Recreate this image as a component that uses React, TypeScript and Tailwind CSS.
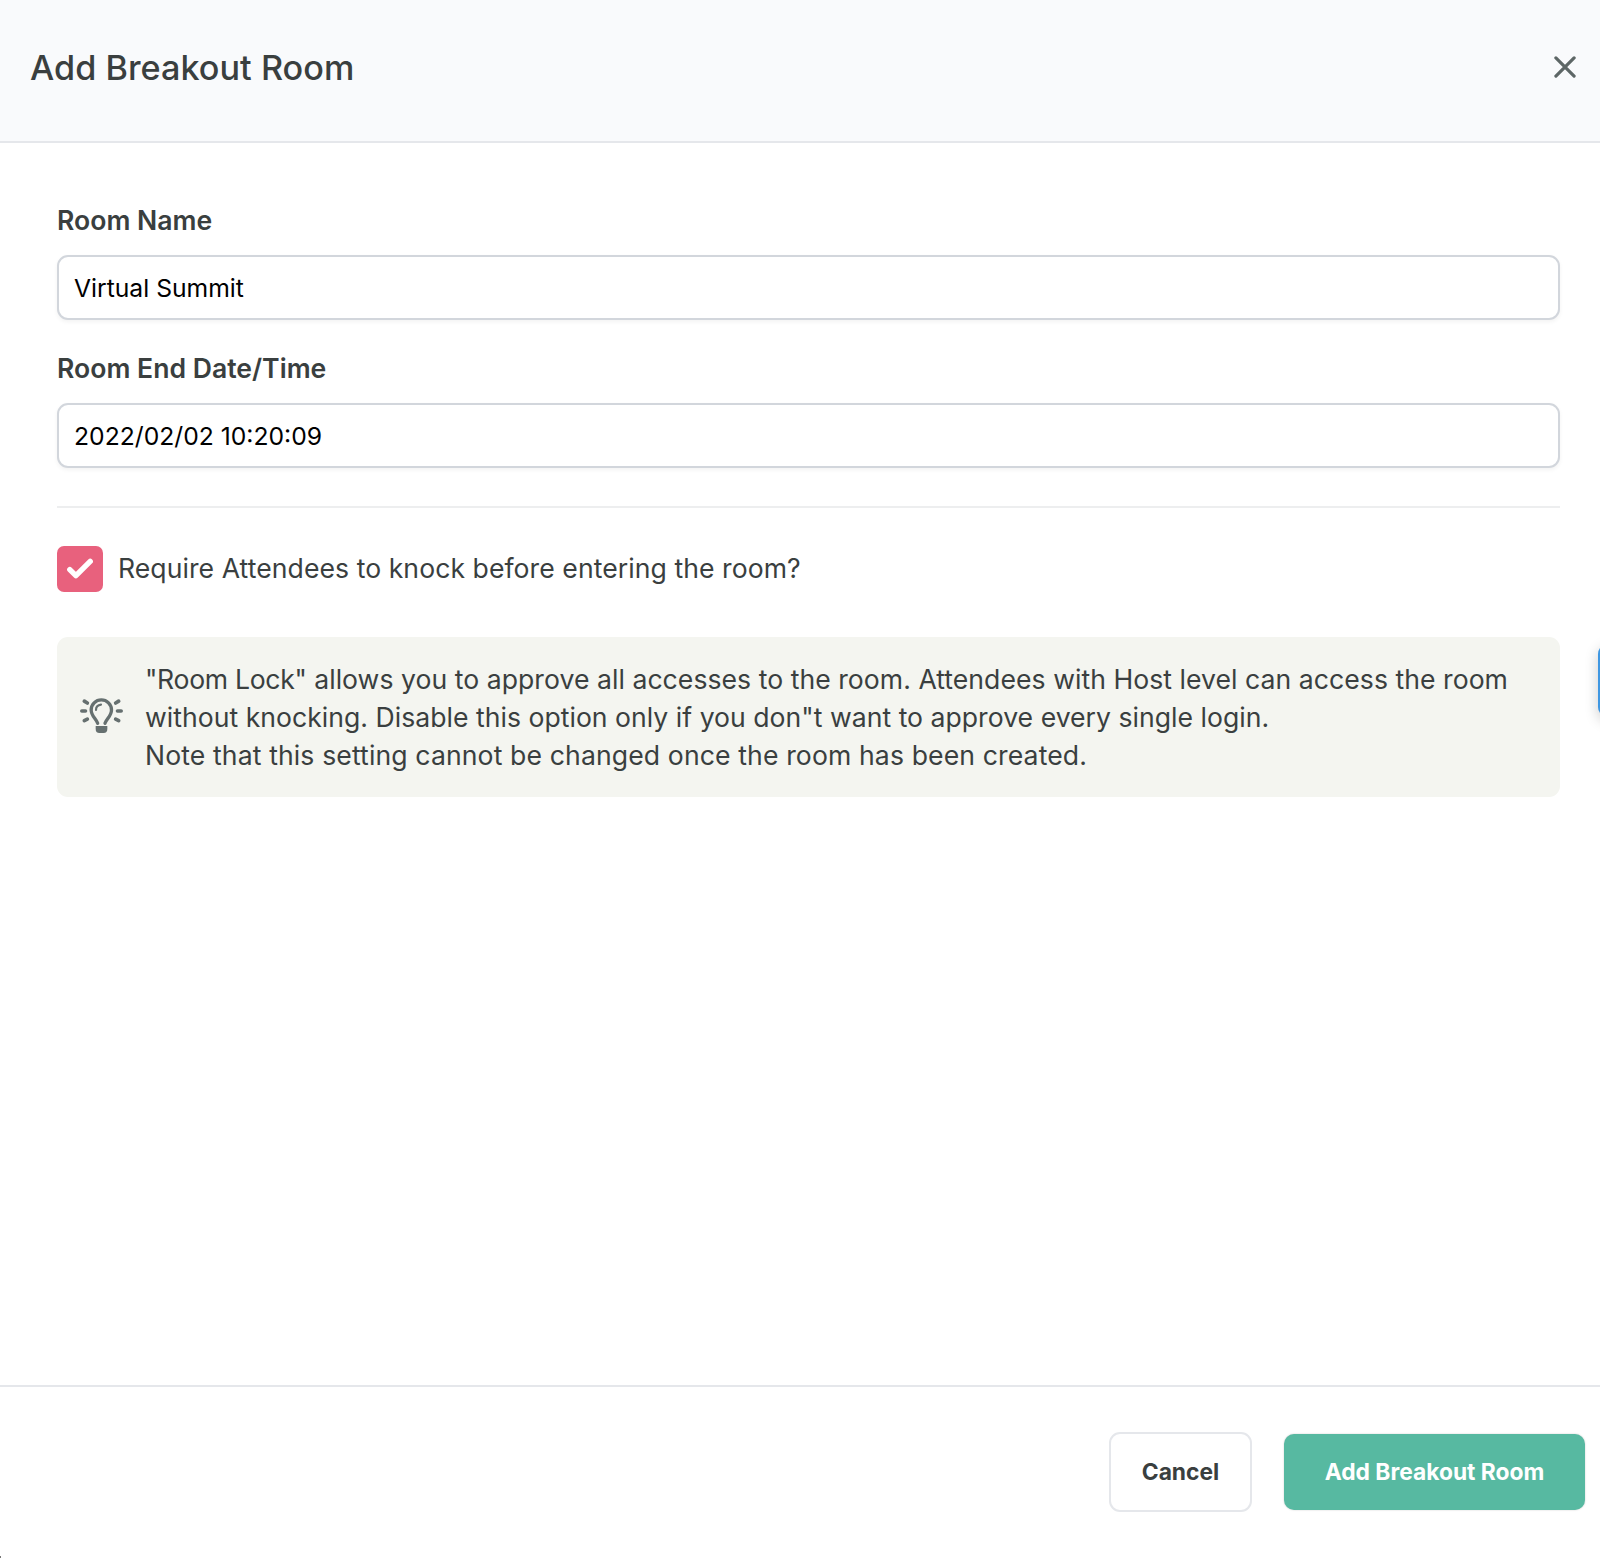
import type { ReactNode } from "react";

function CloseIcon() {
  return (
    <svg className="w-[22px] h-[22px]" viewBox="0 0 22 22" fill="none" stroke="#5d6666" strokeWidth="3.2" strokeLinecap="round">
      <path d="M1.900 1.900l18.200 18.200M20.100 1.900L1.900 20.100" />
    </svg>
  );
}

function CheckIcon() {
  return (
    <svg className="w-[26px] h-[21px]" viewBox="0 0 26 21" fill="none" stroke="#fff" strokeWidth="5.4" strokeLinecap="round" strokeLinejoin="round">
      <path d="M2.800 11.600l6.100 6.100L23.200 3.400" />
    </svg>
  );
}

function BulbIcon() {
  return (
    <svg className="w-[43px] h-[35px] shrink-0" viewBox="0 0 129 105" fill="none" stroke="#667070" strokeLinecap="round" strokeLinejoin="round">
      <path
        d="M53 76C49 63 33.500 54 33.500 36a30.500 30.500 0 0 1 61 0C94.500 54 79 63 75 76"
        strokeWidth="10"
      />
      <path d="M48 36c0-9 6-15 15-16" strokeWidth="6.500" />
      <path d="M47 84h35v8q0 13-11 13h-13q-11 0-11-13z" fill="#667070" stroke="none" />
      <g strokeWidth="11">
        <path d="M5.500 39h11M112.500 39h11M13 9.500l9 5.500M116 9.500l-9 5.500M13 68l9-4.500M116 68l-9-4.500" />
      </g>
    </svg>
  );
}

function Field({ label, value }: { label: string; value: string }) {
  return (
    <label className="block">
      <span className="block text-[26.6px] leading-[38px] font-semibold">{label}</span>
      <input
        type="text"
        defaultValue={value}
        className="block w-full h-[65px] mt-4 px-[15px] border-2 border-[#d2d6dc] rounded-[11px] bg-white text-[24.7px] text-black shadow-[0_2px_4px_rgba(0,0,0,0.05)] outline-none"
      />
    </label>
  );
}

function Hint({ children }: { children: ReactNode }) {
  return (
    <div className="flex items-center mt-[45px] h-[160px] pl-[23px] rounded-[11px] bg-[#f4f5f0]">
      <div className="-mt-[3px]">
        <BulbIcon />
      </div>
      <p className="ml-[22px] text-[26.6px] leading-[38px] whitespace-nowrap">{children}</p>
    </div>
  );
}

export default function App() {
  return (
    <div className="relative flex flex-col w-[1600px] h-[1558px] overflow-hidden bg-white text-[#3a3f3f] font-['Inter',sans-serif]">
      <header className="flex items-center justify-between h-[143px] pl-[30px] pr-6 pb-[7px] border-b-2 border-[#e5e7eb] bg-[#f9fafc]">
        <h2 className="pt-[2px] text-[34.2px] font-medium tracking-[0.03px] whitespace-nowrap">Add Breakout Room</h2>
        <button aria-label="Close">
          <CloseIcon />
        </button>
      </header>

      <main className="flex-1 pl-[57px] pr-10 pt-[58px]">
        <Field label="Room Name" value="Virtual Summit" />
        <div className="mt-[29px]">
          <Field label="Room End Date/Time" value="2022/02/02 10:20:09" />
        </div>

        <hr className="mt-[38px] border-t-2 border-[#edeeef]" />

        <label className="flex items-center mt-[38px]">
          <span className="flex items-center justify-center w-[46px] h-[46px] pb-px rounded-[7px] bg-[#e8617d]">
            <CheckIcon />
          </span>
          <span className="ml-[15px] pb-[2px] text-[26.6px] leading-[38px] tracking-[0.06px] whitespace-nowrap">
            Require Attendees to knock before entering the room?
          </span>
        </label>

        <Hint>
          <span className="tracking-[-0.3px]">"Room Lock"</span>
          <span className="tracking-[0.04px]">
            {" "}allows you to approve all accesses to the room. Attendees with Host level can access the room
          </span>
          <br />
          <span className="tracking-[0.02px]">
            without knocking. Disable this option only if you don"t want to approve every single login.
          </span>
          <br />
          <span className="tracking-[0.12px]">
            Note that this setting cannot be changed once the room has been created.
          </span>
        </Hint>
      </main>

      <footer className="flex items-center justify-end gap-8 h-[173px] pr-[15px] pb-px border-t-2 border-[#e5e7eb] text-[22.8px] font-bold">
        <button className="w-[143px] h-[80px] border-2 border-[#e5e7eb] rounded-[11px] bg-white">Cancel</button>
        <button className="w-[301px] h-[76px] rounded-[10px] bg-[#57b9a1] text-white whitespace-nowrap shadow-[0_0_2px_rgba(0,0,0,0.2)]">
          Add Breakout Room
        </button>
      </footer>

      {/* side tab peeking in from the right edge */}
      <div className="absolute left-[1598px] top-[644px] w-10 h-[73px] rounded-[10px] bg-[#3f97e2] shadow-[0_4px_14px_rgba(0,0,0,0.2)]" />
      <div className="absolute left-0 bottom-0 w-px h-[2px] bg-[#777]" />
    </div>
  );
}
